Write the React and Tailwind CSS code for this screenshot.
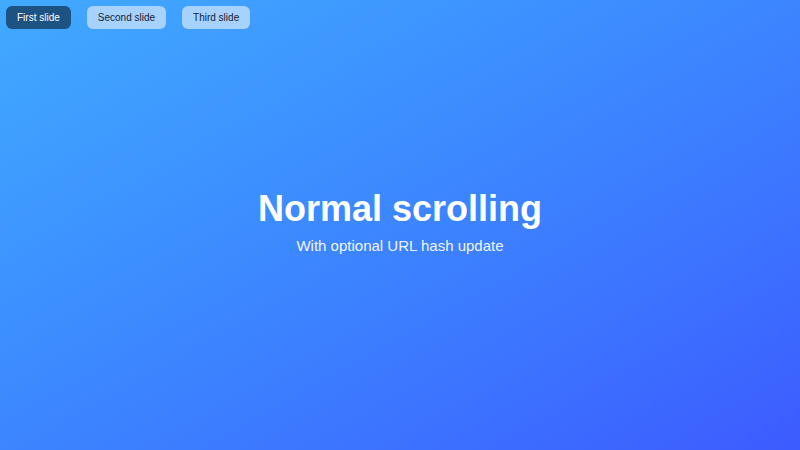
const slides = [
  { id: "first", label: "First slide" },
  { id: "second", label: "Second slide" },
  { id: "third", label: "Third slide" },
];

export default function App() {
  const active = "first";

  return (
    <div
      className="relative h-[450px] w-[800px] overflow-hidden bg-gradient-to-br from-[#41aaff] to-[#3d5bff] text-white"
      style={{ fontFamily: '"Liberation Sans", Arial, sans-serif' }}
    >
      {/* Slide nav */}
      <nav className="absolute left-[6px] top-[6px] flex gap-4">
        {slides.map((s) => (
          <button
            key={s.id}
            className={
              s.id === active
                ? "h-[23px] rounded-md bg-[#1d5383] px-[11px] text-[10px] leading-none text-white"
                : "h-[23px] rounded-md bg-[#a7d2fd] px-[11px] text-[10px] leading-none text-[#10233a]"
            }
          >
            {s.label}
          </button>
        ))}
      </nav>

      {/* Slide content */}
      <section className="flex h-full flex-col items-center justify-center pb-[7px]">
        <h1 className="text-[36px] font-bold leading-[40px]">
          Normal scrolling
        </h1>
        <p className="mt-[8px] text-[15px] leading-[18px] text-white/95">
          With optional URL hash update
        </p>
      </section>
    </div>
  );
}
